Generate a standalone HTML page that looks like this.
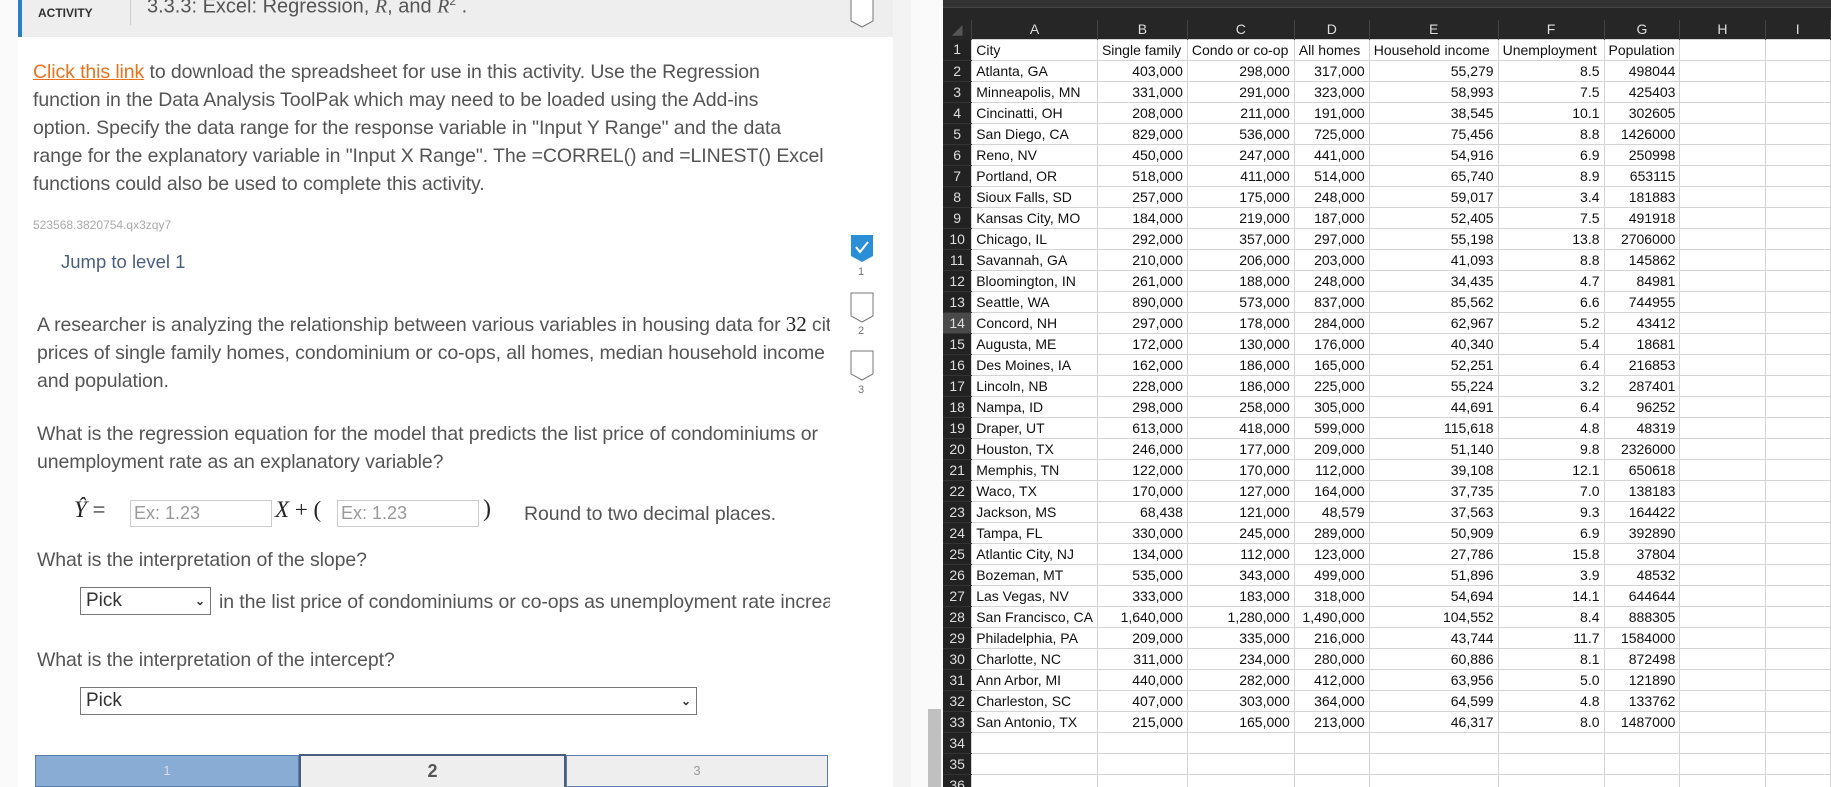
<!DOCTYPE html>
<html><head><meta charset="utf-8"><style>
*{margin:0;padding:0;box-sizing:border-box}
body{width:1831px;height:787px;overflow:hidden;background:#fafafa;position:relative;font-family:"Liberation Sans",sans-serif}
.abs{position:absolute;white-space:nowrap}
#left{position:absolute;left:0;top:0;width:893px;height:787px;background:#fff}
#lm{position:absolute;left:0;top:0;width:18px;height:787px;background:#fafafa}
#hdr{position:absolute;left:18px;top:0;width:875px;height:37px;background:#eee;border-left:4px solid #2a7fc4}
.p{color:#555;font-size:19.5px;line-height:28px;left:33px;font-weight:300;letter-spacing:-0.1px}
.num{position:absolute;left:856px;font-size:11px;color:#777;width:10px;text-align:center}
.inp{position:absolute;height:27px;border:1px solid #ccc;color:#999;font-size:18px;line-height:25px;padding-left:3px}
.sel{position:absolute;height:28px;border:1px solid #777;font-size:19px;line-height:26px;padding-left:5px;color:#333;background:#fff}
.sel b{position:absolute;right:5px;top:0;font-size:12px;font-weight:bold}
#xl{position:absolute;left:943px;top:0;width:888px;height:787px;background:#262626;overflow:hidden}
table{border-collapse:collapse;position:absolute;left:0;top:20px;font-size:14px;table-layout:fixed}
td{height:21px;border:1px solid #d4d4d4;background:#fff;color:#111;padding:0 4px;white-space:nowrap;overflow:hidden;line-height:19px}
td.r{text-align:right}
tr.h td{background:#262626;color:#ddd;text-align:center;height:19px;border:none;border-right:1px solid #444}
td.n{background:#222;color:#ddd;border:none;border-bottom:1px solid #333;text-align:center;padding:0}
</style></head><body>
<div id="left"></div><div id="lm"></div>
<div id="hdr"></div>
<div class="abs" style="left:38px;top:6px;font-size:12px;font-weight:bold;color:#333">ACTIVITY</div>
<div class="abs" style="left:130px;top:0;width:1px;height:25px;background:#ccc"></div>
<div class="abs" style="left:147px;top:-6px;font-size:20px;color:#555">3.3.3: Excel: Regression, <i style="font-family:'Liberation Serif',serif">R</i>, and <i style="font-family:'Liberation Serif',serif">R</i><sup style="font-size:12px">2</sup> .</div>
<svg class="abs" style="left:850px;top:-1px" width="24" height="30"><path d="M1 0V22L12 28L23 22V0" fill="#fff" stroke="#777"/></svg>
<div class="abs p" style="top:58px">
<span style="color:#e8731e;text-decoration:underline">Click this link</span> to download the spreadsheet for use in this activity. Use the Regression<br>
function in the Data Analysis ToolPak which may need to be loaded using the Add-ins<br>
option. Specify the data range for the response variable in "Input Y Range" and the data<br>
range for the explanatory variable in "Input X Range". The =CORREL() and =LINEST() Excel<br>
functions could also be used to complete this activity.</div>
<div class="abs" style="left:33px;top:218px;font-size:12px;color:#aaa">523568.3820754.qx3zqy7</div>
<div class="abs" style="left:61px;top:251px;font-size:18.5px;color:#4a5f80">Jump to level 1</div>
<svg class="abs" style="left:850px;top:234px" width="24" height="30"><path d="M1 1V22L12 28L23 22V1Z" fill="#2a8fd6"/><path d="M6 13L10 18L18 8" fill="none" stroke="#fff" stroke-width="2"/></svg>
<div class="num" style="top:266px">1</div>
<svg class="abs" style="left:850px;top:292px" width="24" height="32"><path d="M1 1V24L12 30L23 24V1Z" fill="#fff" stroke="#777"/></svg>
<div class="num" style="top:325px">2</div>
<svg class="abs" style="left:850px;top:350px" width="24" height="32"><path d="M1 1V24L12 30L23 24V1Z" fill="#fff" stroke="#777"/></svg>
<div class="num" style="top:384px">3</div>
<div class="abs" style="left:0;top:300px;width:830px;height:420px;overflow:hidden">
<div class="abs p" style="left:37px;top:10px">A researcher is analyzing the relationship between various variables in housing data for <span style="font-family:'Liberation Serif',serif;font-size:21px;color:#222">32</span> cities<br>prices of single family homes, condominium or co-ops, all homes, median household income<br>and population.</div>
<div class="abs p" style="left:37px;top:120px">What is the regression equation for the model that predicts the list price of condominiums or<br>unemployment rate as an explanatory variable?</div>
<div class="abs p" style="left:37px;top:246px">What is the interpretation of the slope?</div>
<div class="abs p" style="left:219px;top:288px">in the list price of condominiums or co-ops as unemployment rate increases</div>
<div class="abs p" style="left:37px;top:346px">What is the interpretation of the intercept?</div>
</div>
<div class="abs" style="left:74px;top:497px;font-family:'Liberation Serif',serif;font-size:23px;color:#222"><i>Ŷ</i> =</div>
<div class="inp" style="left:130px;top:500px;width:142px">Ex: 1.23</div>
<div class="abs" style="left:275px;top:497px;font-family:'Liberation Serif',serif;font-size:23px;color:#222"><i>X</i> + (</div>
<div class="inp" style="left:337px;top:500px;width:142px">Ex: 1.23</div>
<div class="abs" style="left:483px;top:496px;font-family:'Liberation Serif',serif;font-size:24px;color:#222">)</div>
<div class="abs p" style="left:524px;top:500px">Round to two decimal places.</div>
<div class="sel" style="left:80px;top:587px;width:131px">Pick<b>⌄</b></div>
<div class="sel" style="left:80px;top:687px;width:617px">Pick<b>⌄</b></div>
<div class="abs" style="left:35px;top:755px;width:264px;height:32px;background:#88acd3;border:1px solid #5a7fae;color:#dde;font-size:13px;text-align:center;line-height:30px">1</div>
<div class="abs" style="left:299px;top:754px;width:267px;height:33px;background:#eee;border:2px solid #4a5f80;border-bottom:none;color:#555;font-size:18px;font-weight:bold;text-align:center;line-height:30px">2</div>
<div class="abs" style="left:566px;top:755px;width:262px;height:32px;background:#eee;border:1px solid #5a7fae;color:#999;font-size:13px;text-align:center;line-height:30px">3</div>
<div class="abs" style="left:893px;top:0;width:18px;height:787px;background:#f3f3f3"></div>
<div class="abs" style="left:928px;top:709px;width:13px;height:78px;background:#c0c0c0"></div>
<div id="xl">
<div class="abs" style="left:0;top:0;width:888px;height:8px;background:#333;border-bottom:1px solid #444"></div>
<table>
<colgroup><col style="width:29px"><col style="width:122px"><col style="width:90px"><col style="width:107px"><col style="width:75px"><col style="width:129px"><col style="width:106px"><col style="width:76px"><col style="width:87px"><col style="width:67px"></colgroup>
<tr class="h"><td style="color:#555">◢</td><td>A</td><td>B</td><td>C</td><td>D</td><td>E</td><td>F</td><td>G</td><td>H</td><td>I</td></tr>
<tr><td class="n">1</td><td>City</td><td>Single family</td><td>Condo or co-op</td><td>All homes</td><td>Household income</td><td>Unemployment</td><td>Population</td><td></td><td></td></tr>
<tr><td class="n">2</td><td>Atlanta, GA</td><td class="r">403,000</td><td class="r">298,000</td><td class="r">317,000</td><td class="r">55,279</td><td class="r">8.5</td><td class="r">498044</td><td></td><td></td></tr>
<tr><td class="n">3</td><td>Minneapolis, MN</td><td class="r">331,000</td><td class="r">291,000</td><td class="r">323,000</td><td class="r">58,993</td><td class="r">7.5</td><td class="r">425403</td><td></td><td></td></tr>
<tr><td class="n">4</td><td>Cincinatti, OH</td><td class="r">208,000</td><td class="r">211,000</td><td class="r">191,000</td><td class="r">38,545</td><td class="r">10.1</td><td class="r">302605</td><td></td><td></td></tr>
<tr><td class="n">5</td><td>San Diego, CA</td><td class="r">829,000</td><td class="r">536,000</td><td class="r">725,000</td><td class="r">75,456</td><td class="r">8.8</td><td class="r">1426000</td><td></td><td></td></tr>
<tr><td class="n">6</td><td>Reno, NV</td><td class="r">450,000</td><td class="r">247,000</td><td class="r">441,000</td><td class="r">54,916</td><td class="r">6.9</td><td class="r">250998</td><td></td><td></td></tr>
<tr><td class="n">7</td><td>Portland, OR</td><td class="r">518,000</td><td class="r">411,000</td><td class="r">514,000</td><td class="r">65,740</td><td class="r">8.9</td><td class="r">653115</td><td></td><td></td></tr>
<tr><td class="n">8</td><td>Sioux Falls, SD</td><td class="r">257,000</td><td class="r">175,000</td><td class="r">248,000</td><td class="r">59,017</td><td class="r">3.4</td><td class="r">181883</td><td></td><td></td></tr>
<tr><td class="n">9</td><td>Kansas City, MO</td><td class="r">184,000</td><td class="r">219,000</td><td class="r">187,000</td><td class="r">52,405</td><td class="r">7.5</td><td class="r">491918</td><td></td><td></td></tr>
<tr><td class="n">10</td><td>Chicago, IL</td><td class="r">292,000</td><td class="r">357,000</td><td class="r">297,000</td><td class="r">55,198</td><td class="r">13.8</td><td class="r">2706000</td><td></td><td></td></tr>
<tr><td class="n">11</td><td>Savannah, GA</td><td class="r">210,000</td><td class="r">206,000</td><td class="r">203,000</td><td class="r">41,093</td><td class="r">8.8</td><td class="r">145862</td><td></td><td></td></tr>
<tr><td class="n">12</td><td>Bloomington, IN</td><td class="r">261,000</td><td class="r">188,000</td><td class="r">248,000</td><td class="r">34,435</td><td class="r">4.7</td><td class="r">84981</td><td></td><td></td></tr>
<tr><td class="n">13</td><td>Seattle, WA</td><td class="r">890,000</td><td class="r">573,000</td><td class="r">837,000</td><td class="r">85,562</td><td class="r">6.6</td><td class="r">744955</td><td></td><td></td></tr>
<tr><td class="n" style="background:#4a4a4a">14</td><td>Concord, NH</td><td class="r">297,000</td><td class="r">178,000</td><td class="r">284,000</td><td class="r">62,967</td><td class="r">5.2</td><td class="r">43412</td><td></td><td></td></tr>
<tr><td class="n">15</td><td>Augusta, ME</td><td class="r">172,000</td><td class="r">130,000</td><td class="r">176,000</td><td class="r">40,340</td><td class="r">5.4</td><td class="r">18681</td><td></td><td></td></tr>
<tr><td class="n">16</td><td>Des Moines, IA</td><td class="r">162,000</td><td class="r">186,000</td><td class="r">165,000</td><td class="r">52,251</td><td class="r">6.4</td><td class="r">216853</td><td></td><td></td></tr>
<tr><td class="n">17</td><td>Lincoln, NB</td><td class="r">228,000</td><td class="r">186,000</td><td class="r">225,000</td><td class="r">55,224</td><td class="r">3.2</td><td class="r">287401</td><td></td><td></td></tr>
<tr><td class="n">18</td><td>Nampa, ID</td><td class="r">298,000</td><td class="r">258,000</td><td class="r">305,000</td><td class="r">44,691</td><td class="r">6.4</td><td class="r">96252</td><td></td><td></td></tr>
<tr><td class="n">19</td><td>Draper, UT</td><td class="r">613,000</td><td class="r">418,000</td><td class="r">599,000</td><td class="r">115,618</td><td class="r">4.8</td><td class="r">48319</td><td></td><td></td></tr>
<tr><td class="n">20</td><td>Houston, TX</td><td class="r">246,000</td><td class="r">177,000</td><td class="r">209,000</td><td class="r">51,140</td><td class="r">9.8</td><td class="r">2326000</td><td></td><td></td></tr>
<tr><td class="n">21</td><td>Memphis, TN</td><td class="r">122,000</td><td class="r">170,000</td><td class="r">112,000</td><td class="r">39,108</td><td class="r">12.1</td><td class="r">650618</td><td></td><td></td></tr>
<tr><td class="n">22</td><td>Waco, TX</td><td class="r">170,000</td><td class="r">127,000</td><td class="r">164,000</td><td class="r">37,735</td><td class="r">7.0</td><td class="r">138183</td><td></td><td></td></tr>
<tr><td class="n">23</td><td>Jackson, MS</td><td class="r">68,438</td><td class="r">121,000</td><td class="r">48,579</td><td class="r">37,563</td><td class="r">9.3</td><td class="r">164422</td><td></td><td></td></tr>
<tr><td class="n">24</td><td>Tampa, FL</td><td class="r">330,000</td><td class="r">245,000</td><td class="r">289,000</td><td class="r">50,909</td><td class="r">6.9</td><td class="r">392890</td><td></td><td></td></tr>
<tr><td class="n">25</td><td>Atlantic City, NJ</td><td class="r">134,000</td><td class="r">112,000</td><td class="r">123,000</td><td class="r">27,786</td><td class="r">15.8</td><td class="r">37804</td><td></td><td></td></tr>
<tr><td class="n">26</td><td>Bozeman, MT</td><td class="r">535,000</td><td class="r">343,000</td><td class="r">499,000</td><td class="r">51,896</td><td class="r">3.9</td><td class="r">48532</td><td></td><td></td></tr>
<tr><td class="n">27</td><td>Las Vegas, NV</td><td class="r">333,000</td><td class="r">183,000</td><td class="r">318,000</td><td class="r">54,694</td><td class="r">14.1</td><td class="r">644644</td><td></td><td></td></tr>
<tr><td class="n">28</td><td>San Francisco, CA</td><td class="r">1,640,000</td><td class="r">1,280,000</td><td class="r">1,490,000</td><td class="r">104,552</td><td class="r">8.4</td><td class="r">888305</td><td></td><td></td></tr>
<tr><td class="n">29</td><td>Philadelphia, PA</td><td class="r">209,000</td><td class="r">335,000</td><td class="r">216,000</td><td class="r">43,744</td><td class="r">11.7</td><td class="r">1584000</td><td></td><td></td></tr>
<tr><td class="n">30</td><td>Charlotte, NC</td><td class="r">311,000</td><td class="r">234,000</td><td class="r">280,000</td><td class="r">60,886</td><td class="r">8.1</td><td class="r">872498</td><td></td><td></td></tr>
<tr><td class="n">31</td><td>Ann Arbor, MI</td><td class="r">440,000</td><td class="r">282,000</td><td class="r">412,000</td><td class="r">63,956</td><td class="r">5.0</td><td class="r">121890</td><td></td><td></td></tr>
<tr><td class="n">32</td><td>Charleston, SC</td><td class="r">407,000</td><td class="r">303,000</td><td class="r">364,000</td><td class="r">64,599</td><td class="r">4.8</td><td class="r">133762</td><td></td><td></td></tr>
<tr><td class="n">33</td><td>San Antonio, TX</td><td class="r">215,000</td><td class="r">165,000</td><td class="r">213,000</td><td class="r">46,317</td><td class="r">8.0</td><td class="r">1487000</td><td></td><td></td></tr>
<tr><td class="n">34</td><td></td><td></td><td></td><td></td><td></td><td></td><td></td><td></td><td></td></tr>
<tr><td class="n">35</td><td></td><td></td><td></td><td></td><td></td><td></td><td></td><td></td><td></td></tr>
<tr><td class="n">36</td><td></td><td></td><td></td><td></td><td></td><td></td><td></td><td></td><td></td></tr>
</table>
</div>
</body></html>
